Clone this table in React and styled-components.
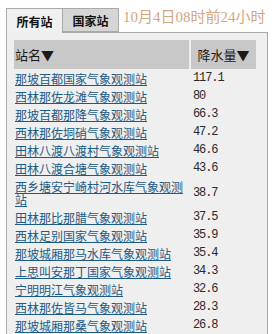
import React from "react";
import styled, { createGlobalStyle } from "styled-components";

const GlobalStyle = createGlobalStyle`
  html, body {
    margin: 0;
    padding: 0;
    background: #ffffff;
  }
  body {
    font-family: "Noto Sans CJK SC", "Liberation Sans", sans-serif;
  }
`;

const rows = [
  { name: "那坡百都国家气象观测站", rain: "117.1" },
  { name: "西林那佐龙滩气象观测站", rain: "80" },
  { name: "那坡百都那降气象观测站", rain: "66.3" },
  { name: "西林那佐垌硝气象观测站", rain: "47.2" },
  { name: "田林八渡八渡村气象观测站", rain: "46.6" },
  { name: "田林八渡合塘气象观测站", rain: "43.6" },
  { name: "西乡塘安宁崎村河水库气象观测站", rain: "38.7" },
  { name: "田林那比那腊气象观测站", rain: "37.5" },
  { name: "西林足别国家气象观测站", rain: "35.9" },
  { name: "那坡城厢那马水库气象观测站", rain: "35.4" },
  { name: "上思叫安那丁国家气象观测站", rain: "34.3" },
  { name: "宁明明江气象观测站", rain: "32.6" },
  { name: "西林那佐皆马气象观测站", rain: "28.3" },
  { name: "那坡城厢那桑气象观测站", rain: "26.8" },
  { name: "田林八渡那比气象观测站", rain: "25.1" },
];

const App = () => {
  return (
    <>
      <GlobalStyle />
      <Page>
        <TabBar>
          <Tab active>所有站</Tab>
          <Tab>国家站</Tab>
          <DateText>10月4日08时前24小时</DateText>
        </TabBar>
        <Panel>
          <HeadRow>
            <HeadCell>站名▼</HeadCell>
            <HeadCell center>降水量▼</HeadCell>
          </HeadRow>
          {rows.map((r) => (
            <Row key={r.name}>
              <NameCell>
                <StationLink href="#">{r.name}</StationLink>
              </NameCell>
              <ValueCell>{r.rain}</ValueCell>
            </Row>
          ))}
        </Panel>
      </Page>
    </>
  );
};

const Page = styled.div`
  width: 277px;
  height: 334px;
  overflow: hidden;
  padding: 8px 0 0 6px;
  box-sizing: border-box;
`;

const TabBar = styled.div`
  display: flex;
  align-items: flex-end;
  height: 24px;
  position: relative;
  z-index: 1;
`;

const Tab = styled.div`
  box-sizing: border-box;
  width: ${(p) => (p.active ? "57px" : "56px")};
  height: ${(p) => (p.active ? "25px" : "24px")};
  margin-bottom: ${(p) => (p.active ? "-1px" : "0")};
  border: 1px solid #a9a9a9;
  border-bottom: ${(p) => (p.active ? "none" : "1px solid #a9a9a9")};
  border-left: ${(p) => (p.active ? "1px solid #a9a9a9" : "none")};
  background: ${(p) => (p.active ? "#f0f0f0" : "#d6d6d6")};
  display: flex;
  align-items: center;
  justify-content: center;
  font-size: 12px;
  font-weight: bold;
  color: #111;
  padding-top: 1px;
`;

const DateText = styled.div`
  align-self: flex-start;
  margin-left: 4px;
  margin-top: -3px;
  font-family: "Liberation Serif", "Noto Sans CJK SC", serif;
  font-size: 15px;
  color: #d5a67f;
  white-space: nowrap;
`;

const Panel = styled.div`
  box-sizing: border-box;
  width: 262px;
  height: 330px;
  border: 1px solid #a9a9a9;
  background: #efefef;
  padding: 7px 10px 0 7px;
`;

const HeadRow = styled.div`
  display: flex;
  gap: 2px;
  height: 29px;
`;

const HeadCell = styled.div`
  flex: 0 0 ${(p) => (p.center ? "65px" : "175px")};
  background: #c8c8c8;
  display: flex;
  align-items: center;
  justify-content: ${(p) => (p.center ? "center" : "flex-start")};
  padding-left: ${(p) => (p.center ? "0" : "1px")};
  box-sizing: border-box;
  font-size: 13px;
  color: #1a1a1a;
`;

const Row = styled.div`
  display: flex;
  gap: 2px;
  align-items: center;
`;

const NameCell = styled.div`
  flex: 0 0 175px;
  width: 175px;
  min-width: 0;
  box-sizing: border-box;
  padding: 2.5px 1px 2.5px 1px;
  font-size: 12px;
  line-height: 13px;
  word-break: break-all;
  overflow-wrap: anywhere;
`;

const StationLink = styled.a`
  color: #1d5b85;
  text-decoration: underline;
`;

const ValueCell = styled.div`
  padding-left: 2px;
  font-family: "Liberation Mono", "DejaVu Sans Mono", monospace;
  font-size: 12px;
  letter-spacing: -1.1px;
  color: #2a2a2a;
`;

export default App;
